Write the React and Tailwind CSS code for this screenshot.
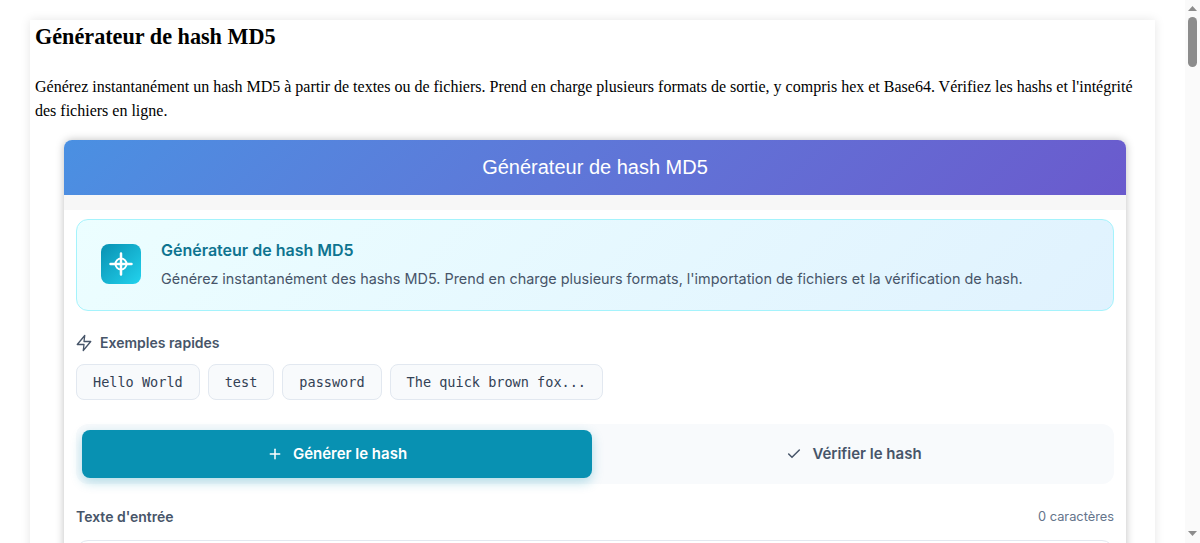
import { Plus, Check } from 'lucide-react';

const examples = ['Hello World', 'test', 'password', 'The quick brown fox...'];

const App = () => {
  return (
    <div className="h-[543px] flex overflow-hidden bg-white">
      <div className="flex-1 min-w-0 pt-5 px-[30px]">
        <main className="bg-white h-[600px] px-[5px] shadow-[0_0_10px_rgba(0,0,0,0.1)] font-['Liberation_Serif',serif] text-black">
          <h1 className="text-[22.2px] font-bold leading-[34px]">Générateur de hash MD5</h1>
          <p className="mt-[21px] text-base leading-6">
            Générez instantanément un hash MD5 à partir de textes ou de fichiers. Prend en charge plusieurs formats de sortie, y compris hex et Base64. Vérifiez les hashs et l'intégrité des fichiers en ligne.
          </p>

          {/* Tool */}
          <section className="mt-[17px] ml-[29px] w-[1062px] rounded-lg overflow-hidden shadow-[0_0_8px_rgba(0,0,0,0.25)] font-['Inter',sans-serif]">
            <header className="h-[55px] pb-[2px] flex items-center justify-center bg-linear-135 from-[#4a90e2] to-[#6a5acd] text-white text-xl font-['Liberation_Sans',sans-serif]">
              Générateur de hash MD5
            </header>
            <div className="h-[15px] bg-[#f7f7f7]" />
            <div className="bg-white px-3 pt-[9px] pb-10">
              {/* Info box */}
              <div className="h-[92px] pb-[2px] flex items-center gap-5 px-6 rounded-xl border border-[#a5f3fc] bg-linear-135 from-[#ecfeff] to-[#e0f2fe]">
                <div className="w-10 h-10 rounded-lg flex items-center justify-center bg-linear-135 from-[#0891b2] to-[#22d3ee]">
                  <svg width="24" height="24" viewBox="0 0 24 24" fill="none" stroke="white" strokeLinecap="round">
                    <circle cx="12" cy="12" r="5.5" strokeWidth="2" />
                    <path d="M12 1.5v21M1.5 12h21" strokeWidth="2.5" />
                  </svg>
                </div>
                <div>
                  <h3 className="text-base font-semibold leading-6 text-[#0e7490]">Générateur de hash MD5</h3>
                  <p className="mt-1.5 text-[14.4px] leading-[22px] text-[#475569]">
                    Générez instantanément des hashs MD5. Prend en charge plusieurs formats, l'importation de fichiers et la vérification de hash.
                  </p>
                </div>
              </div>

              {/* Examples */}
              <div className="mt-[22px] flex items-center gap-[7px] text-sm font-semibold leading-5 text-[#475569]">
                <svg className="-ml-px" width="18" height="18" viewBox="0 0 24 24" fill="none" stroke="currentColor" strokeWidth="1.75" strokeLinejoin="round">
                  <polygon points="13 2 3 14 12 14 11 22 21 10 12 10" />
                </svg>
                <span>Exemples rapides</span>
              </div>
              <div className="mt-[11px] flex gap-2">
                {examples.map((ex) => (
                  <button key={ex} className="h-9 px-4 rounded-lg border border-[#e2e8f0] bg-[#f8fafc] text-[13.55px] text-[#334155] font-['DejaVu_Sans_Mono',monospace]">
                    {ex}
                  </button>
                ))}
              </div>

              {/* Tabs */}
              <div className="mt-6 h-[60px] p-1.5 flex gap-2 rounded-xl bg-[#f8fafc]">
                <button className="w-[510px] flex items-center justify-center gap-2.5 rounded-lg bg-[#0891b2] text-white text-[15px] font-semibold shadow-[0_4px_12px_rgba(8,145,178,0.3)]">
                  <Plus size={16} strokeWidth={2.25} />
                  Générer le hash
                </button>
                <button className="flex-1 flex items-center justify-center gap-2.5 rounded-lg text-[#475569] text-[15px] font-semibold">
                  <Check size={16} strokeWidth={2.25} />
                  Vérifier le hash
                </button>
              </div>

              {/* Input */}
              <div className="mt-[23px] flex items-center justify-between">
                <span className="text-sm font-semibold leading-5 text-[#475569]">Texte d'entrée</span>
                <span className="text-[12.8px] text-[#64748b]">0 caractères</span>
              </div>
              <div className="mt-[13px] h-40 rounded-xl border border-[#e2e8f0]" />
            </div>
          </section>
        </main>
      </div>

      {/* Scrollbar */}
      <aside className="w-[15px] shrink-0 flex flex-col items-center pt-1.5 pb-[7px] bg-[#fafafa]">
        <svg width="9" height="5" viewBox="0 0 9 5" fill="#8c8c8c"><path d="M4.5 0L9 5H0z" /></svg>
        <div className="mt-[6px] w-[9px] h-[50px] rounded-full bg-[#8c8c8c]" />
        <svg className="mt-auto" width="9" height="5" viewBox="0 0 9 5" fill="#8c8c8c"><path d="M0 0h9L4.5 5z" /></svg>
      </aside>
    </div>
  );
};

export default App;
